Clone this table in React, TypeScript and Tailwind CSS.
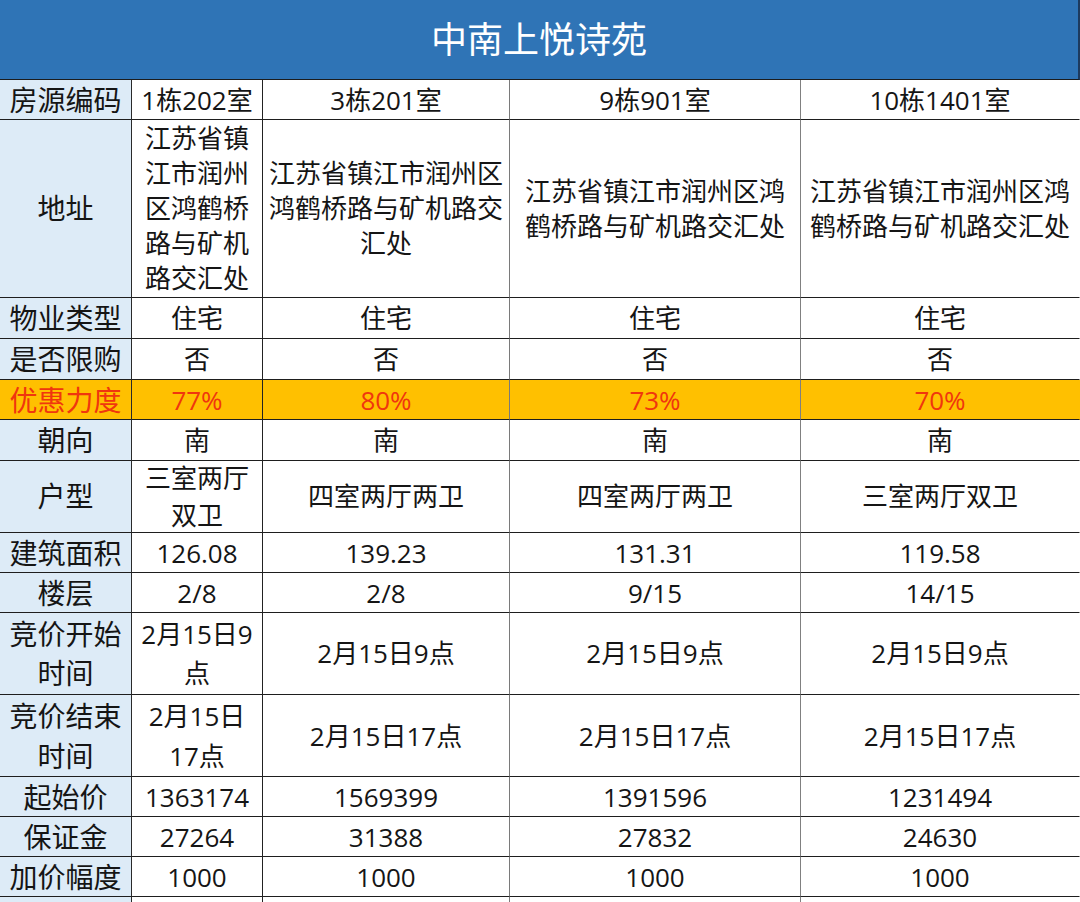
import React from "react";

type Row = {
  label: string;
  cells: string[];
  h: number;
  lh?: string;
  hot?: boolean;
};

const rows: Row[] = [
  { label: "房源编码", cells: ["1栋202室", "3栋201室", "9栋901室", "10栋1401室"], h: 40 },
  {
    label: "地址",
    cells: [
      "江苏省镇\n江市润州\n区鸿鹤桥\n路与矿机\n路交汇处",
      "江苏省镇江市润州区\n鸿鹤桥路与矿机路交\n汇处",
      "江苏省镇江市润州区鸿\n鹤桥路与矿机路交汇处",
      "江苏省镇江市润州区鸿\n鹤桥路与矿机路交汇处",
    ],
    h: 178,
    lh: "leading-[35px]",
  },
  { label: "物业类型", cells: ["住宅", "住宅", "住宅", "住宅"], h: 41 },
  { label: "是否限购", cells: ["否", "否", "否", "否"], h: 41 },
  { label: "优惠力度", cells: ["77%", "80%", "73%", "70%"], h: 40, hot: true },
  { label: "朝向", cells: ["南", "南", "南", "南"], h: 41 },
  { label: "户型", cells: ["三室两厅\n双卫", "四室两厅两卫", "四室两厅两卫", "三室两厅双卫"], h: 72, lh: "leading-[37px]" },
  { label: "建筑面积", cells: ["126.08", "139.23", "131.31", "119.58"], h: 40 },
  { label: "楼层", cells: ["2/8", "2/8", "9/15", "14/15"], h: 40 },
  { label: "竞价开始\n时间", cells: ["2月15日9\n点", "2月15日9点", "2月15日9点", "2月15日9点"], h: 82, lh: "leading-[39px]" },
  { label: "竞价结束\n时间", cells: ["2月15日\n17点", "2月15日17点", "2月15日17点", "2月15日17点"], h: 82, lh: "leading-[40px]" },
  { label: "起始价", cells: ["1363174", "1569399", "1391596", "1231494"], h: 40 },
  { label: "保证金", cells: ["27264", "31388", "27832", "24630"], h: 40 },
  { label: "加价幅度", cells: ["1000", "1000", "1000", "1000"], h: 40 },
  { label: "", cells: ["", "", "", ""], h: 40 },
];

// column separators: the first two are near black, the right ones grey
const vline = ["border-r-[#2a2a2a]", "border-r-[#222]", "border-r-[#7a7a7a]", "border-r-[#808080]", "border-r-transparent"];

export default function App() {
  return (
    <div
      className="w-[1080px] h-[902px] overflow-hidden bg-white text-[#151515]"
      style={{ fontFamily: '"Open Sans", "Noto Sans CJK SC", sans-serif' }}
    >
      <div className="h-[80px] bg-[#2f74b6] border-b border-b-[#1c1c1c] border-r-2 border-r-[#1d3a5e] flex items-center justify-center">
        <span className="text-white text-[36px] leading-none">中南上悦诗苑</span>
      </div>
      <div className="grid grid-cols-[132px_131px_247px_291px_279px]">
        {rows.map((row, i) => (
          <React.Fragment key={i}>
            {[row.label, ...row.cells].map((c, j) => (
              <div
                key={j}
                style={{ height: row.h }}
                className={`flex items-center justify-center text-center whitespace-pre-line border-b border-b-[#1e1e1e] border-r ${
                  j === 0 ? "text-[28px]" : "text-[26px]"
                } ${row.lh ?? "leading-[34px]"} ${vline[j]} ${
                  row.hot
                    ? "bg-[#ffc000] text-[#f0360e]"
                    : j === 0
                    ? "bg-[#ddebf7]"
                    : "bg-white"
                }`}
              >
                {c}
              </div>
            ))}
          </React.Fragment>
        ))}
      </div>
    </div>
  );
}
